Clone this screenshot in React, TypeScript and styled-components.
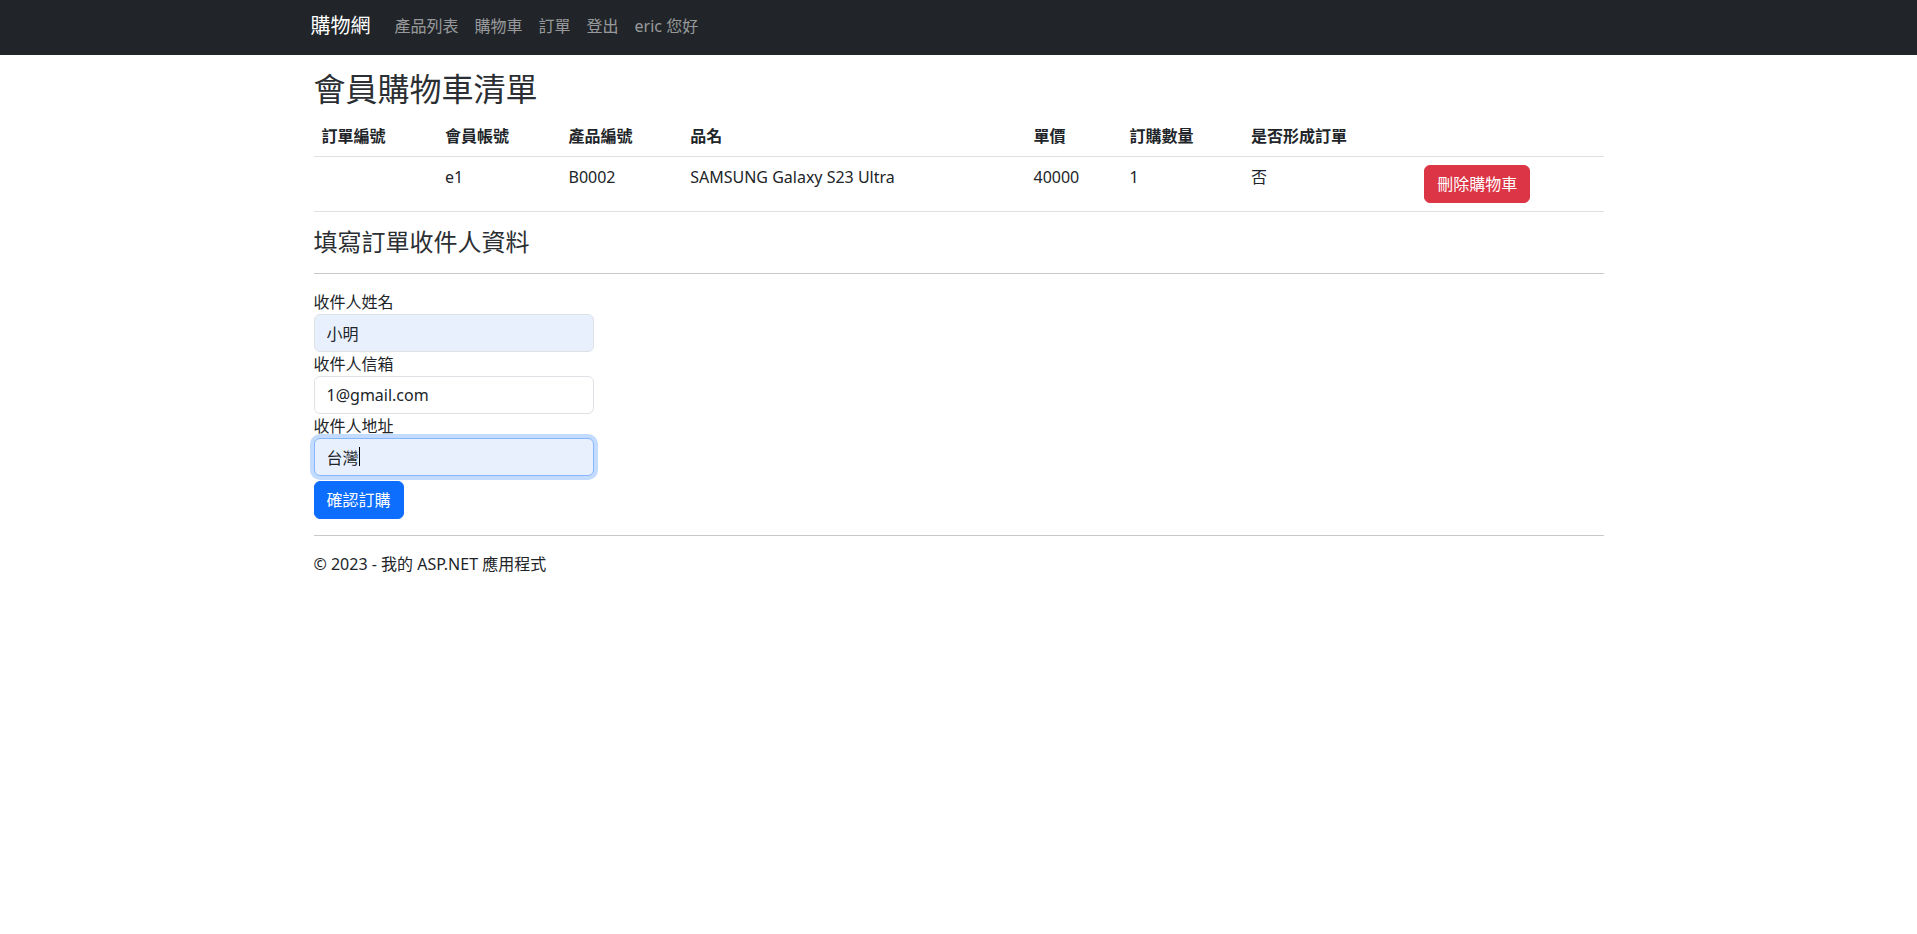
import styled, { createGlobalStyle, css } from 'styled-components';

interface CartItem {
  orderId: string;
  memberId: string;
  productId: string;
  name: string;
  price: number;
  qty: number;
  approved: boolean;
}

const GlobalStyle = createGlobalStyle`
  body {
    margin: 0;
    font-family: 'Noto Sans', 'Noto Sans CJK TC', sans-serif;
    font-size: 16px;
    line-height: 1.5;
    color: #212529;
    background: #fff;
  }
  * {
    box-sizing: border-box;
  }
`;

const NavBar = styled.nav`
  width: 100%;
  height: 55px;
  display: flex;
  align-items: center;
  background-color: #212529;
`;
const NavContainer = styled.div`
  width: 100%;
  max-width: 1296px;
  margin: 0 auto 3px;
  display: flex;
  align-items: center;
`;
const Brand = styled.a`
  font-size: 20px;
  line-height: 30px;
  color: #fff;
  margin-right: 16px;
  text-decoration: none;
`;
const NavList = styled.ul`
  display: flex;
  list-style: none;
  margin: 0;
  padding: 0;
`;
const NavLink = styled.a`
  display: block;
  padding: 8px;
  color: rgba(255, 255, 255, 0.55);
  text-decoration: none;
`;

const Main = styled.main`
  width: 100%;
  max-width: 1290px;
  margin: 0 auto;
  padding-top: 15px;
`;
const PageTitle = styled.h2`
  font-size: 32px;
  font-weight: 400;
  line-height: 1.2;
  margin: 0 0 8px;
  color: #2b2f33;
`;
const CartTable = styled.table`
  width: 100%;
  border-collapse: collapse;
  table-layout: fixed;
  margin-bottom: 16px;
`;
const HeadCell = styled.th<{ $w?: number }>`
  width: ${(props) => (props.$w ? `${props.$w}px` : 'auto')};
  text-align: left;
  font-weight: 700;
  padding: 8px;
  border-bottom: 1px solid #dee2e6;
`;
const BodyCell = styled.td`
  padding: 8px;
  vertical-align: top;
  border-bottom: 1px solid #dee2e6;
`;
const ActionButton = styled.button<{ $variant: 'danger' | 'primary' }>`
  display: inline-block;
  height: 38px;
  padding: 6px 12px;
  font-family: inherit;
  font-size: 16px;
  line-height: 24px;
  color: #fff;
  border-radius: 6px;
  cursor: pointer;
  ${(props) =>
    props.$variant === 'danger'
      ? css`
          background-color: #dc3545;
          border: 1px solid #dc3545;
        `
      : css`
          background-color: #0d6efd;
          border: 1px solid #0d6efd;
        `}
`;

const SectionTitle = styled.h4`
  font-size: 24px;
  font-weight: 400;
  line-height: 1.2;
  margin: 0 0 8px;
  color: #2b2f33;
`;
const Divider = styled.hr`
  border: 0;
  border-top: 1px solid #c8c9ca;
  margin: 16px 0;
`;
const OrderForm = styled.form`
  display: flex;
  flex-direction: column;
  align-items: flex-start;
`;
const FieldLabel = styled.label`
  display: block;
  line-height: 24px;
`;
const InputWrap = styled.div`
  position: relative;
  width: 280px;
`;
const TextInput = styled.input<{ $autofill?: boolean; $focused?: boolean }>`
  display: block;
  width: 280px;
  height: 38px;
  padding: 6px 12px;
  font-family: inherit;
  font-size: 16px;
  line-height: 24px;
  color: #212529;
  background-color: ${(props) => (props.$autofill ? '#e8f0fe' : '#fff')};
  border: 1px solid ${(props) => (props.$focused ? '#86b7fe' : '#dee2e6')};
  border-radius: 6px;
  outline: none;
  box-shadow: ${(props) =>
    props.$focused ? '0 0 0 4px rgba(13, 110, 253, 0.25)' : 'none'};
`;
const Caret = styled.span`
  position: absolute;
  left: 45px;
  top: 9px;
  width: 1px;
  height: 19px;
  background-color: #000;
`;
const SubmitRow = styled.div`
  margin-top: 5px;
`;
const FooterText = styled.p`
  margin: 0 0 16px;
`;

const cart: CartItem[] = [
  {
    orderId: '',
    memberId: 'e1',
    productId: 'B0002',
    name: 'SAMSUNG Galaxy S23 Ultra',
    price: 40000,
    qty: 1,
    approved: false,
  },
];

const App = () => {
  return (
    <>
      <GlobalStyle />
      <NavBar>
        <NavContainer>
          <Brand href="#">購物網</Brand>
          <NavList>
            <li><NavLink href="#">產品列表</NavLink></li>
            <li><NavLink href="#">購物車</NavLink></li>
            <li><NavLink href="#">訂單</NavLink></li>
            <li><NavLink href="#">登出</NavLink></li>
            <li><NavLink href="#">eric 您好</NavLink></li>
          </NavList>
        </NavContainer>
      </NavBar>
      <Main>
        <PageTitle>會員購物車清單</PageTitle>
        <CartTable>
          <thead>
            <tr>
              <HeadCell $w={123.5}>訂單編號</HeadCell>
              <HeadCell $w={123.5}>會員帳號</HeadCell>
              <HeadCell $w={121.7}>產品編號</HeadCell>
              <HeadCell $w={343.3}>品名</HeadCell>
              <HeadCell $w={96}>單價</HeadCell>
              <HeadCell $w={121.4}>訂購數量</HeadCell>
              <HeadCell $w={173.3}>是否形成訂單</HeadCell>
              <HeadCell></HeadCell>
            </tr>
          </thead>
          <tbody>
            {cart.map((item) => (
              <tr key={item.productId}>
                <BodyCell>{item.orderId}</BodyCell>
                <BodyCell>{item.memberId}</BodyCell>
                <BodyCell>{item.productId}</BodyCell>
                <BodyCell>{item.name}</BodyCell>
                <BodyCell>{item.price}</BodyCell>
                <BodyCell>{item.qty}</BodyCell>
                <BodyCell>{item.approved ? '是' : '否'}</BodyCell>
                <BodyCell>
                  <ActionButton type="button" $variant="danger">
                    刪除購物車
                  </ActionButton>
                </BodyCell>
              </tr>
            ))}
          </tbody>
        </CartTable>
        <SectionTitle>填寫訂單收件人資料</SectionTitle>
        <Divider />
        <OrderForm onSubmit={(e) => e.preventDefault()}>
          <FieldLabel htmlFor="name">收件人姓名</FieldLabel>
          <TextInput id="name" defaultValue="小明" $autofill />
          <FieldLabel htmlFor="email">收件人信箱</FieldLabel>
          <TextInput id="email" defaultValue="1@gmail.com" />
          <FieldLabel htmlFor="address">收件人地址</FieldLabel>
          <InputWrap>
            <TextInput id="address" defaultValue="台灣" $autofill $focused />
            <Caret />
          </InputWrap>
          <SubmitRow>
            <ActionButton type="submit" $variant="primary">
              確認訂購
            </ActionButton>
          </SubmitRow>
        </OrderForm>
        <Divider />
        <footer>
          <FooterText>© 2023 - 我的 ASP.NET 應用程式</FooterText>
        </footer>
      </Main>
    </>
  );
};

export default App;
